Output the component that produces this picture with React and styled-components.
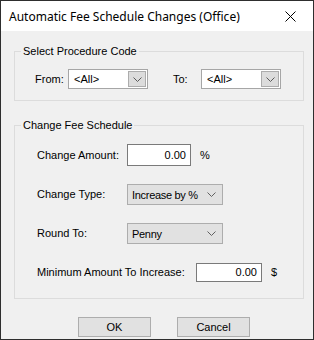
import React from 'react';
import styled, { createGlobalStyle } from 'styled-components';

const GlobalStyle = createGlobalStyle`
    html, body {
        margin: 0;
        padding: 0;
        background: #ffffff;
    }
    body {
        font-family: "Liberation Sans", Arial, sans-serif;
        font-size: 11px;
        color: #000000;
    }
`;

function Chevron({ color = '#606060' }) {
    return (
        <svg width="9" height="5" viewBox="0 0 9 5">
            <path d="M0.5 0.5 L4.5 4.5 L8.5 0.5" fill="none" stroke={color} strokeWidth="1" />
        </svg>
    );
}

function ComboBox({ value, width }) {
    return (
        <ComboWrapper width={width}>
            <span className='combo_text'>{value}</span>
            <div className='combo_button'>
                <Chevron color='#5a5a5a' />
            </div>
        </ComboWrapper>
    );
}

function DropList({ value, width }) {
    return (
        <DropListWrapper width={width}>
            <span className='drop_text'>{value}</span>
            <Chevron />
        </DropListWrapper>
    );
}

function FieldRow({ label, labelWidth, children }) {
    return (
        <Row>
            <Label width={labelWidth}>{label}</Label>
            {children}
        </Row>
    );
}

export default function App() {
    return (
        <>
            <GlobalStyle />
            <Window>
                <TitleBar>
                    <Title>Automatic Fee Schedule Changes (Office)</Title>
                    <CloseButton>
                        <svg width="11" height="11" viewBox="0 0 11 11">
                            <path d="M0.5 0.5 L10.5 10.5 M10.5 0.5 L0.5 10.5" stroke="#000" strokeWidth="1" />
                        </svg>
                    </CloseButton>
                </TitleBar>
                <Body>
                    <GroupBox>
                        <legend>Select Procedure Code</legend>
                        <CodeRow>
                            <Label width={33}>From:</Label>
                            <ComboBox value='<All>' width={80} />
                            <Label width={28} gap={25}>To:</Label>
                            <ComboBox value='<All>' width={80} />
                        </CodeRow>
                    </GroupBox>

                    <GroupBox spaced>
                        <legend>Change Fee Schedule</legend>
                        <FeeBody>
                            <FieldRow label='Change Amount:' labelWidth={90}>
                                <NumberBox width={64} height={22}>0.00</NumberBox>
                                <Unit>%</Unit>
                            </FieldRow>
                            <FieldRow label='Change Type:' labelWidth={90}>
                                <DropList value='Increase by %' width={96} />
                            </FieldRow>
                            <FieldRow label='Round To:' labelWidth={90}>
                                <DropList value='Penny' width={96} />
                            </FieldRow>
                            <FieldRow label='Minimum Amount To Increase:' labelWidth={159}>
                                <NumberBox width={66} height={19}>0.00</NumberBox>
                                <Unit>$</Unit>
                            </FieldRow>
                        </FeeBody>
                    </GroupBox>

                    <ButtonBar>
                        <Button>OK</Button>
                        <Button>Cancel</Button>
                    </ButtonBar>
                </Body>
            </Window>
        </>
    );
}

const Window = styled.div`
    width: 314px;
    height: 340px;
    box-sizing: border-box;
    border: 1px solid #2e2e2e;
    background: #f0f0f0;
    display: flex;
    flex-direction: column;
    overflow: hidden;
`;

const TitleBar = styled.div`
    height: 30px;
    background: #ffffff;
    display: flex;
    align-items: center;
    justify-content: space-between;
    padding: 0 0 0 8px;
`;

const Title = styled.div`
    font-family: "Segoe UI", "Noto Sans", sans-serif;
    font-size: 12px;
    color: #000000;
    padding-top: 1px;
`;

const CloseButton = styled.div`
    width: 46px;
    height: 30px;
    display: flex;
    align-items: center;
    justify-content: center;
`;

const Body = styled.div`
    flex: 1;
    padding: 14px 10px 0 13px;
`;

const GroupBox = styled.fieldset`
    margin: ${props => props.spaced ? '18px' : '0'} 0 0 0;
    padding: 0;
    width: 290px;
    box-sizing: border-box;
    border: 1px solid #dcdcdc;
    min-inline-size: 0;

    legend {
        margin-left: 6px;
        padding: 0 2px;
        font-size: 11px;
        line-height: 13px;
        color: #000000;
    }
`;

const CodeRow = styled.div`
    display: flex;
    align-items: center;
    padding: 11px 0 11px 20px;
`;

const FeeBody = styled.div`
    display: flex;
    flex-direction: column;
    gap: 17px;
    padding: 12px 0 15px 22px;
`;

const Row = styled.div`
    display: flex;
    align-items: center;
    height: 22px;
`;

const Label = styled.span`
    display: inline-block;
    width: ${props => props.width}px;
    margin-left: ${props => props.gap || 0}px;
    white-space: nowrap;
`;

const ComboWrapper = styled.div`
    width: ${props => props.width}px;
    height: 20px;
    box-sizing: border-box;
    border: 1px solid #a6a6a6;
    background: #ffffff;
    display: flex;
    align-items: center;
    justify-content: space-between;
    padding: 0 1px 0 5px;

    .combo_button {
        width: 18px;
        height: 16px;
        box-sizing: border-box;
        border: 1px solid #acacac;
        background: #dcdcdc;
        display: flex;
        align-items: center;
        justify-content: center;
    }
`;

const DropListWrapper = styled.div`
    width: ${props => props.width}px;
    height: 21px;
    box-sizing: border-box;
    border: 1px solid #adadad;
    background: #e1e1e1;
    display: flex;
    align-items: center;
    justify-content: space-between;
    padding: 1px 6px 0 4px;
    font-size: 11px;
    white-space: nowrap;

    .drop_text {
        letter-spacing: -0.3px;
    }
`;

const NumberBox = styled.div`
    width: ${props => props.width}px;
    height: ${props => props.height}px;
    box-sizing: border-box;
    border: 1px solid #7a7a7a;
    background: #ffffff;
    display: flex;
    align-items: center;
    justify-content: flex-end;
    padding-right: 4px;
    font-size: 11px;
`;

const Unit = styled.span`
    margin-left: 9px;
`;

const ButtonBar = styled.div`
    display: flex;
    gap: 26px;
    padding: 18px 0 0 64px;
`;

const Button = styled.button`
    width: 73px;
    height: 20px;
    box-sizing: border-box;
    border: 1px solid #adadad;
    background: #e1e1e1;
    font-family: "Liberation Sans", Arial, sans-serif;
    font-size: 11px;
    color: #000000;
    padding: 0;
`;
